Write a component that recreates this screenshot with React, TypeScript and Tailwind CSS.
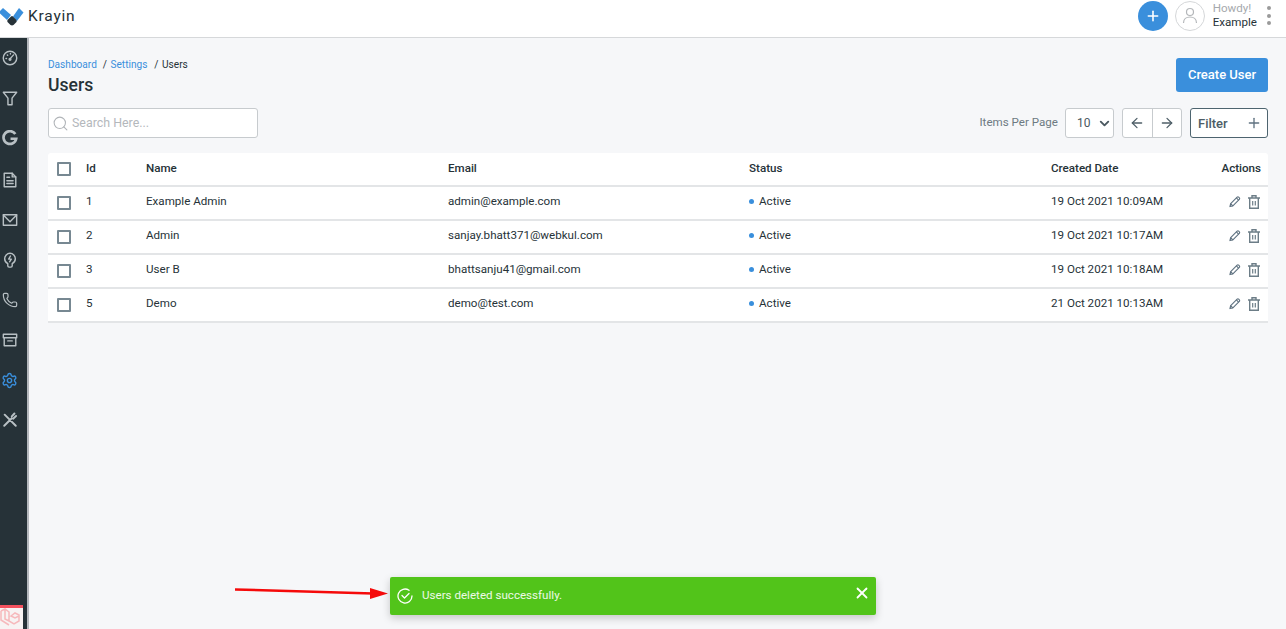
import { ArrowLeft, ArrowRight, ChevronDown, Phone, Plus, Search, Settings, X } from "lucide-react"

const users = [
  { id: 1, name: "Example Admin", email: "admin@example.com", created: "19 Oct 2021 10:09AM" },
  { id: 2, name: "Admin", email: "sanjay.bhatt371@webkul.com", created: "19 Oct 2021 10:17AM" },
  { id: 3, name: "User B", email: "bhattsanju41@gmail.com", created: "19 Oct 2021 10:18AM" },
  { id: 5, name: "Demo", email: "demo@test.com", created: "21 Oct 2021 10:13AM" },
]

function Logo() {
  return (
    <svg width="24" height="18" viewBox="0 8 24 18" className="shrink-0">
      <path d="M0 11 L3 8 L11 15 L7 20 L0 13.500 Z" fill="#3a8fdc" />
      <path d="M19 8 L23.500 12.500 L17 21 L13 16.500 Z" fill="#3a8fdc" />
      <path d="M11 16.500 Q12 15.500 13 16.500 L16.500 20 Q17 21 16.500 22 L13.500 25 Q12 25.800 10.500 25 L7.500 22 Q7 21 7.500 20 Z" fill="#263238" />
    </svg>
  )
}

function NavIcon({ children, color = "#b8c0c4" }: { children: React.ReactNode; color?: string }) {
  return (
    <div className="flex h-10 w-[19px] items-center justify-center">
      <svg width="16" height="16" viewBox="0 0 18 18" fill="none" stroke={color} strokeWidth="1.600" strokeLinecap="round" strokeLinejoin="round">
        {children}
      </svg>
    </div>
  )
}

function Sidebar() {
  return (
    <aside className="relative w-[29px] shrink-0 border-r-2 border-[#b4b8bd] bg-[#263238]">
      {/* dashboard */}
      <NavIcon>
        <circle cx="9" cy="9" r="7.600" />
        <path d="M9 10 L13 5.500" />
        <path d="M4.500 9.500h.6M6 5.500l.4.4M9.500 4v.6" />
        <circle cx="9" cy="10.500" r="1" />
      </NavIcon>
      {/* filter */}
      <NavIcon>
        <path d="M1.500 2.500h15l-5.200 6.700v7.300h-4.600V9.200Z" />
      </NavIcon>
      {/* G */}
      <NavIcon>
        <path d="M15 4.600A7.200 7.200 0 1 0 16 9.800H9.600" strokeWidth="3" strokeLinecap="butt" strokeLinejoin="miter" />
      </NavIcon>
      <div className="h-[2px]" />
      {/* document */}
      <NavIcon>
        <path d="M2.500 1.500h9l4 4v11h-13Z" />
        <path d="M11.500 1.500v4h4M5.500 6h3M5.500 9.800h7M5.500 13h7" />
      </NavIcon>
      {/* mail */}
      <NavIcon>
        <path d="M1.500 3h15v12h-15Z" />
        <path d="M1.500 3.500 9 11l7.500-7.500" />
      </NavIcon>
      {/* bulb */}
      <NavIcon>
        <path d="M6.500 13C4.400 11.800 3 10 3 7.500a6 6 0 0 1 12 0c0 2.500-1.400 4.300-3.500 5.500v2.500a1.500 1.500 0 0 1-1.500 1.500H8a1.500 1.500 0 0 1-1.500-1.500Z" />
        <path d="M9.500 4.500 7.500 8h3L8.500 11" />
      </NavIcon>
      {/* phone */}
      <div className="flex h-10 w-[19px] items-center justify-center">
        <Phone size={16} color="#b8c0c4" strokeWidth={1.800} />
      </div>
      {/* archive */}
      <NavIcon>
        <path d="M1.500 2.500h15v4h-15ZM2.500 6.500v9h13v-9M6.500 10h5" />
      </NavIcon>
      {/* settings */}
      <div className="flex h-10 w-[19px] items-center justify-center">
        <Settings size={17} color="#3a8fdc" strokeWidth={2} />
      </div>
      {/* tools */}
      <NavIcon>
        <path d="M2.500 15.500 11 7M11 5l3-3.300M12.500 7.500l3.300-3M3 3l12.500 12.500" strokeWidth="2.200" />
      </NavIcon>
      <div className="absolute bottom-0 left-0 h-[24px] w-[23px] border-t-[3px] border-[#f4525f] bg-[#f7f3f3]">
        <svg width="22" height="21" viewBox="0 0 22 21" fill="none" stroke="#f6b9bc" strokeWidth="1.500">
          <path d="M1 3 5 1l4 3v9l5 3 5-3V7l-4-2-4 3 4 2 4-2M1 3v9l8 5M5 1v10l4 2" />
        </svg>
      </div>
    </aside>
  )
}

function Checkbox() {
  return <span className="block h-[14px] w-[14px] rounded-[1px] border-2 border-[#778892] bg-white" />
}

function Pencil() {
  return (
    <svg width="12" height="13" viewBox="0 0 13 13" fill="none" stroke="#5f7280" strokeWidth="1.200" strokeLinejoin="round">
      <path d="M1 12l.8-3.200 7-7a1.200 1.200 0 0 1 1.700 0l.700.700a1.200 1.200 0 0 1 0 1.700l-7 7Z" />
      <path d="M8 2.600 10.400 5M1.800 8.800l2.400 2.400" />
    </svg>
  )
}

function Trash() {
  return (
    <svg width="12" height="14" viewBox="0 0 12 14" fill="none" stroke="#6c7d87" strokeWidth="1.400">
      <path d="M0 3h12M4 2.500V.8h4v1.700M1.700 3v10.300h8.600V3" />
      <path d="M4.700 6v4.500M7.300 6v4.500" strokeWidth="1.200" />
    </svg>
  )
}

function UsersTable() {
  return (
    <div className="mt-[15px] overflow-hidden rounded-t-[3px] bg-white text-[11.600px] text-[#263238]">
      <div className="grid h-[34px] grid-cols-[29px_60px_302px_301px_302px_1fr] items-center border-b-2 border-[#e3e5e7] pl-[9px] pr-[7px] font-medium">
        <Checkbox />
        <span>Id</span>
        <span>Name</span>
        <span>Email</span>
        <span>Status</span>
        <div className="flex justify-between">
          <span>Created Date</span>
          <span>Actions</span>
        </div>
      </div>
      {users.map((u) => (
        <div
          key={u.id}
          className="grid h-[34px] grid-cols-[29px_60px_302px_301px_302px_1fr] items-center border-b-2 border-[#e3e5e7] pl-[9px] pr-[8px]"
        >
          <Checkbox />
          <span className="mb-[2px]">{u.id}</span>
          <span className="mb-[2px]">{u.name}</span>
          <span className="mb-[2px]">{u.email}</span>
          <span className="mb-[2px] flex items-center gap-[5px]">
            <span className="h-[5px] w-[5px] rounded-full bg-[#3a8fdc]" />
            Active
          </span>
          <div className="flex items-center justify-between">
            <span className="mb-[2px]">{u.created}</span>
            <span className="mb-[2px] flex items-center gap-[7px]">
              <Pencil />
              <Trash />
            </span>
          </div>
        </div>
      ))}
    </div>
  )
}

export default function App() {
  return (
    <div className="relative flex h-[629px] w-[1286px] flex-col overflow-hidden bg-[#f6f7f9] font-['Roboto',sans-serif]">
      {/* Top bar */}
      <header className="flex h-[38px] shrink-0 items-center justify-between border-b border-[#d6d8da] bg-white pr-[15px]">
        <div className="mb-[4px] flex items-center gap-[4px]">
          <Logo />
          <span className="text-[15.500px] tracking-[0.8px] text-[#263238]">Krayin</span>
        </div>
        <div className="mb-[5px] flex items-center">
          <div className="flex h-[30px] w-[30px] items-center justify-center rounded-full bg-[#3a8fdc]">
            <Plus size={16} color="white" strokeWidth={2.400} />
          </div>
          <div className="ml-[7px] flex h-[30px] w-[30px] items-center justify-center rounded-full border border-[#d5d7d9]">
            <svg width="16" height="18" viewBox="0 0 16 18" fill="none" stroke="#b3b6b9" strokeWidth="1.200">
              <circle cx="8" cy="5" r="3.500" />
              <path d="M1.500 16c0-4 3-6 6.500-6s6.500 2 6.500 6" />
            </svg>
          </div>
          <div className="mb-[2px] ml-[8px] text-[11.600px] leading-[14px]">
            <div className="text-[#a6a9ad]">Howdy!</div>
            <div className="text-[#263238]">Example</div>
          </div>
          <div className="mb-[1px] ml-[10px] flex flex-col gap-[3.500px]">
            <span className="h-[4px] w-[4px] rounded-full bg-[#9a9a9a]" />
            <span className="h-[4px] w-[4px] rounded-full bg-[#9a9a9a]" />
            <span className="h-[4px] w-[4px] rounded-full bg-[#9a9a9a]" />
          </div>
        </div>
      </header>

      <div className="flex min-h-0 flex-1">
        <Sidebar />
        <main className="flex-1 pl-[19px] pr-[18px] pt-[20px]">
          <div className="flex items-start justify-between">
            <div>
              <div className="text-[10.100px] leading-[14px] text-[#263238]">
                <span className="text-[#3a8fdc]">Dashboard</span>
                <span className="ml-[6px]">/ </span>
                <span className="ml-[1px] text-[#3a8fdc]">Settings</span>
                <span className="ml-[7px]">/ </span>
                <span className="ml-[1px]">Users</span>
              </div>
              <h1 className="mt-[3px] text-[17.600px] font-medium leading-[21px] text-[#263238]">Users</h1>
            </div>
            <button className="h-[34px] w-[92px] rounded-[3px] bg-[#3a8fdc] text-[13px] font-medium text-white">
              Create User
            </button>
          </div>

          <div className="mt-[12px] flex items-center justify-between">
            <div className="flex h-[30px] w-[210px] items-center gap-[3px] rounded-[3px] border border-[#c7cbce] bg-white pl-[3px]">
              <Search size={17} color="#b0b4b8" strokeWidth={1.500} />
              <span className="text-[12.400px] text-[#b4b8bc]">Search Here...</span>
            </div>
            <div className="flex items-center">
              <span className="text-[11.600px] text-[#6d7a82]">Items Per Page</span>
              <div className="ml-[7px] flex h-[30px] w-[49px] items-center justify-between rounded-[3px] border border-[#c7cbce] bg-white pl-[11px] pr-[1px] text-[12px] text-[#4a5860]">
                10
                <ChevronDown size={15} color="#4a5860" strokeWidth={3} />
              </div>
              <div className="ml-[8px] flex h-[30px] w-[60px] rounded-[3px] border border-[#c7cbce] bg-white">
                <div className="flex flex-1 items-center justify-center border-r border-[#c7cbce]">
                  <ArrowLeft size={16} color="#4f5f68" strokeWidth={1.900} />
                </div>
                <div className="flex flex-1 items-center justify-center">
                  <ArrowRight size={16} color="#4f5f68" strokeWidth={1.900} />
                </div>
              </div>
              <div className="ml-[8px] flex h-[30px] w-[78px] items-center justify-between rounded-[3px] border border-[#4d646f] bg-white pl-[7px] pr-[5px] text-[13px] font-medium text-[#4d5d66]">
                <span className="pt-[1px]">Filter</span>
                <Plus size={16} color="#5f7280" strokeWidth={2} />
              </div>
            </div>
          </div>

          <UsersTable />
        </main>
      </div>

      {/* Annotation arrow */}
      <svg width="160" height="20" viewBox="0 0 160 20" className="absolute left-[233px] top-[583px]">
        <path d="M2 6.500 L140 10.500" stroke="#f50a0a" strokeWidth="2.500" />
        <path d="M137 5 L155 10.500 L137 16 Z" fill="#f50a0a" />
      </svg>

      {/* Toast */}
      <div className="absolute left-[390px] top-[577px] flex h-[38px] w-[486px] items-center rounded-[2px] bg-[#52c41a] pl-[7px] pr-[5px] shadow-[0_3px_8px_rgba(0,0,0,0.2)]">
        <svg width="16" height="16" viewBox="0 0 16 16" fill="none" stroke="white" strokeWidth="1.300" strokeLinecap="round" strokeLinejoin="round">
          <path d="M15 8A7 7 0 1 1 12 2.300" />
          <path d="M5 7.500 7.500 10 12 5.500" />
        </svg>
        <span className="ml-[9px] flex-1 text-[11.600px] text-white/90">Users deleted successfully.</span>
        <X size={18} color="white" strokeWidth={2.400} className="mb-[6px]" />
      </div>
    </div>
  )
}
